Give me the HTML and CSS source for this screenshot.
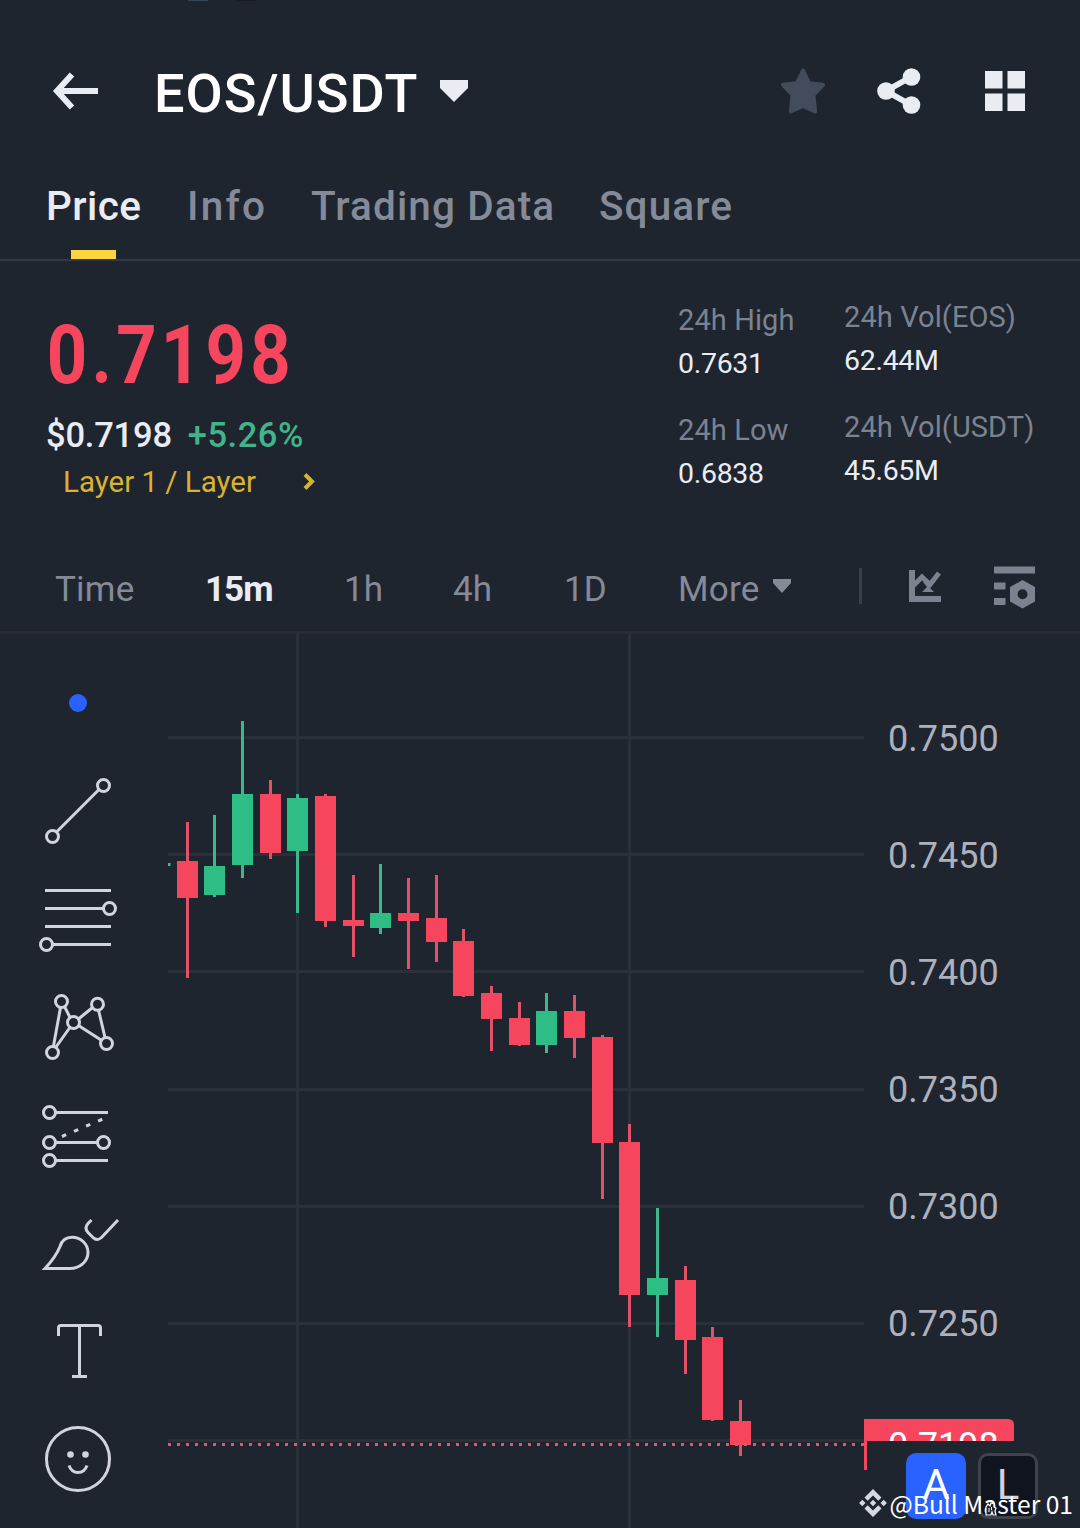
FILE: index.html
```html
<!DOCTYPE html>
<html lang="en">
<head>
    <meta charset="UTF-8">
    <meta name="viewport" content="width=device-width, initial-scale=1.0">
    <title>EOS/USDT</title>
    <link rel="stylesheet" href="styles.css">
</head>
<body>

    <header class="header">
        <svg class="back" width="46" height="38" viewBox="0 0 46 38">
            <path d="M20 2.500L5 19l15 16.500M5 19h41" fill="none" stroke="#eaecf3" stroke-width="6"/>
        </svg>
        <h1 class="pair">EOS/USDT</h1>
        <svg class="pair-caret" width="28" height="22" viewBox="0 0 28 22">
            <path d="M0 0h28v8L14 22 0 8z" fill="#eaecf3"/>
        </svg>
        <div class="header-icons">
            <svg width="46" height="48" viewBox="0 0 46 48">
                <path d="M23 3.500l6 12.700 14 1.600-9.600 10.200 1.700 16.500L23 39 10.900 44.500l1.700-16.500L3 17.800l14-1.600z" fill="#434c5a" stroke="#434c5a" stroke-width="4" stroke-linejoin="round"/>
            </svg>
            <svg width="44" height="48" viewBox="0 0 44 48">
                <path d="M34 10L9 24l25 14" fill="none" stroke="#eaecf3" stroke-width="6"/>
                <circle cx="34.500" cy="10" r="8.800" fill="#eaecf3"/>
                <circle cx="9" cy="24" r="8.800" fill="#eaecf3"/>
                <circle cx="34.500" cy="38" r="8.800" fill="#eaecf3"/>
            </svg>
            <svg width="40" height="40" viewBox="0 0 40 40">
                <path d="M0 0h17.500v17.500H0zM22.500 0H40v17.500H22.500zM0 22.500h17.500V40H0zM22.500 22.500H40V40H22.500z" fill="#eaecf3"/>
            </svg>
        </div>
    </header>

    <nav class="tabs">
        <span class="tab active">Price</span>
        <span class="tab info">Info</span>
        <span class="tab">Trading Data</span>
        <span class="tab">Square</span>
    </nav>

    <section class="summary">
        <div class="quote">
            <div class="last-price">0.7198</div>
            <div class="change">
                <span class="fiat">$0.7198</span>
                <span class="percent">+5.26%</span>
            </div>
            <div class="category">
                <span>Layer 1 / Layer</span>
                <svg width="12" height="18" viewBox="0 0 12 18">
                    <path d="M2 1.500l7 7-7 7" fill="none" stroke="#d9b22f" stroke-width="4"/>
                </svg>
            </div>
        </div>
        <div class="stats">
            <div class="stat">
                <div class="label">24h High</div>
                <div class="value">0.7631</div>
            </div>
            <div class="stat">
                <div class="label">24h Low</div>
                <div class="value">0.6838</div>
            </div>
        </div>
        <div class="stats volume">
            <div class="stat">
                <div class="label">24h Vol(EOS)</div>
                <div class="value">62.44M</div>
            </div>
            <div class="stat">
                <div class="label">24h Vol(USDT)</div>
                <div class="value">45.65M</div>
            </div>
        </div>
    </section>

    <div class="intervals">
        <span>Time</span>
        <span class="selected">15m</span>
        <span>1h</span>
        <span>4h</span>
        <span>1D</span>
        <span>More</span>
        <svg width="18" height="42" viewBox="0 0 18 42">
            <path d="M0 11h18v4l-9 10-9-10z" fill="#848a97"/>
        </svg>
        <svg width="3" height="42" viewBox="0 0 3 42">
            <path d="M1.500 0v36" stroke="#3a404b" stroke-width="3"/>
        </svg>
        <svg width="33" height="42" viewBox="0 0 33 42">
            <path d="M0 2h6v26h26v6H0z" fill="#7b8290"/>
            <path d="M4 18l9-9 8 7.500L30 5" fill="none" stroke="#7b8290" stroke-width="5"/>
            <path d="M14 14h10l-4 5 5 5H13l5-5z" fill="#7b8290"/>
        </svg>
        <svg width="42" height="46" viewBox="0 0 42 46">
            <path d="M0 .5h41v7H0zM0 16.500h11.500v7H0zM0 32h11.500v7H0z" fill="#7b8290"/>
            <path d="M28.500 14l12.500 7v14.500l-12.500 7-12.500-7V21z" fill="#7b8290"/>
            <circle cx="28.500" cy="28.300" r="5" fill="#1f252f"/>
        </svg>
    </div>

    <main class="chart">
        <aside class="tools">
            <svg viewBox="0 0 168 108">
                <circle class="dot" cx="78" cy="54" r="9"/>
            </svg>
            <svg viewBox="0 0 168 108">
                <path d="M56.500 75L99 32.500"/>
                <circle cx="52.500" cy="79.500" r="6"/>
                <circle cx="103.500" cy="28.500" r="6"/>
            </svg>
            <svg viewBox="0 0 168 108">
                <path d="M45 25.500h66M45 43.500h58M45 61.500h66M53 79.500h58"/>
                <circle cx="109.500" cy="43.500" r="6"/>
                <circle cx="46.500" cy="79.500" r="6"/>
            </svg>
            <svg viewBox="0 0 168 108">
                <path d="M60.500 34.500L53.500 73M64.500 33.500l5.500 11M56 74l13.500-19M78.500 46L92 35M98.500 37l6.500 27.500M78.500 52.500L101 67"/>
                <circle cx="61.500" cy="28.500" r="6"/>
                <circle cx="97.500" cy="31.300" r="6"/>
                <circle cx="73.500" cy="49.500" r="6"/>
                <circle cx="52.500" cy="79.500" r="6"/>
                <circle cx="106.500" cy="70.500" r="6"/>
            </svg>
            <svg viewBox="0 0 168 108">
                <path d="M55 31.500h53M55 61.500h42M55 79.500h53"/>
                <path d="M62 55.500L104 37.500" stroke-dasharray="4.500 8.600"/>
                <circle cx="49.500" cy="31.500" r="6"/>
                <circle cx="49.500" cy="61.500" r="6"/>
                <circle cx="103.500" cy="61.500" r="6"/>
                <circle cx="49.500" cy="79.500" r="6"/>
            </svg>
            <svg viewBox="0 0 168 108">
                <path d="M45 79.500C52 72 57 65 60 57.500C62 51 67 48.300 72 48.300C81 48.300 88 55 88 63.500C88 73 79 79.500 70 79.500z"/>
                <path d="M91.500 31l-3.500 3.500q-4 4.500 0 9l5 5q4 4 8.500 0L118 31"/>
            </svg>
            <svg viewBox="0 0 168 108">
                <path d="M58.500 39v-8q0-2.500 2.500-2.500h37q2.500 0 2.500 2.500v8M79.500 28.500v51M72 79.500h15"/>
            </svg>
            <svg viewBox="0 0 168 108">
                <circle cx="78" cy="54" r="31.500"/>
                <circle class="eye" cx="70.500" cy="49.500" r="3.300"/>
                <circle class="eye" cx="85.500" cy="49.500" r="3.300"/>
                <path d="M69 60.500q2.500 7 9 7t9-7"/>
            </svg>
        </aside>

        <svg class="plot" viewBox="168 634 912 894">
            <path class="grid" d="M168 737.500H864M168 854.500H864M168 971.500H864M168 1089.500H864M168 1206.500H864M168 1323.500H864M168 1440.500H864"/>
            <path class="grid" d="M297.500 634V1528M629.500 634V1528"/>

            <!-- wicks -->
            <path class="wick up" d="M169 863V866M214.500 815V897M242.500 721V878M297.500 794V913M380.500 864V934M546.500 993V1053M657.500 1208V1337"/>
            <path class="wick down" d="M187.500 822V978M270.500 780V859M325.500 794V927M353.500 875V957M408.500 878V969M436.500 875V962M463.500 929V997M491.500 986V1051M519.500 1002V1046M574.500 995V1058M602.500 1035V1199M629.500 1124V1327M685.500 1266V1374M712.500 1327V1421M740.500 1400V1456"/>

            <!-- bodies -->
            <path class="body up" d="M214.500 866V895M242.500 794V865M297.500 798V851M380.500 913V928M546.500 1011V1045M657.500 1278V1295"/>
            <path class="body down" d="M187.500 861V898M270.500 794V853M325.500 796V921M353.500 920V926M408.500 913V921M436.500 918V942M463.500 941V996M491.500 993V1019M519.500 1018V1045M574.500 1011V1038M602.500 1037V1143M629.500 1142V1295M685.500 1280V1340M712.500 1337V1420M740.500 1421V1445"/>

            <path class="last-line" d="M168 1444.500H864"/>

            <g class="axis">
                <text x="888" y="751">0.7500</text>
                <text x="888" y="868">0.7450</text>
                <text x="888" y="985">0.7400</text>
                <text x="888" y="1102">0.7350</text>
                <text x="888" y="1219">0.7300</text>
                <text x="888" y="1336">0.7250</text>
            </g>

            <clipPath id="tag-clip"><path d="M864 1419h150v22H864z"/></clipPath>
            <g clip-path="url(#tag-clip)">
                <path class="tag" d="M864 1419h144q6 0 6 6v20H864z"/>
                <text class="tag-text" x="888" y="1458">0.7198</text>
            </g>
            <path class="tag" d="M864 1441h3v29h-3z"/>
        </svg>

        <div class="scale-buttons">
            <span class="scale auto">A</span>
            <span class="scale log">L</span>
        </div>

        <div class="watermark">
            <svg width="28" height="28" viewBox="0 0 28 28">
                <path d="M14 0l8.500 8.500-3.200 3.200L14 6.400l-5.300 5.300-3.200-3.200zM3.300 10.800L6.500 14l-3.200 3.200L.1 14zM14 10.800l3.200 3.200-3.200 3.200-3.200-3.200zM24.700 10.800l3.200 3.200-3.200 3.200-3.200-3.200zM14 28l8.500-8.500-3.200-3.200L14 21.600l-5.300-5.300-3.200 3.200z" fill="#d5d7e2"/>
            </svg>
            <span>@Bull Master 01</span>
            <svg class="pointer" width="12" height="14" viewBox="0 0 12 14">
                <path d="M1 13V5l2-3 2 2 1-3 3 1v3l2 1-1 3 1 4H8l-1-3-1 3z" fill="#20242e" stroke="#fff" stroke-width="1.200"/>
                <path d="M4 6v4M6.500 5v3" stroke="#fff" stroke-width="1"/>
            </svg>
        </div>
    </main>

</body>
</html>
```
FILE: styles.css
```css
* {
    box-sizing: border-box;
}
body {
    margin: 0;
    width: 1080px;
    height: 1528px;
    overflow: hidden;
    background-color: #1f252f;
    color: #eaecf3;
    font-family: Roboto, "Noto Sans", sans-serif;
}
svg {
    display: block;
    flex-shrink: 0;
}

/* Header */
.header {
    display: flex;
    align-items: center;
    height: 182px;
    padding: 0 55px 0 52px;
    background: linear-gradient(#34465a, #34465a) 188px 0 / 20px 1px no-repeat,
                linear-gradient(#151a26, #151a26) 237px 0 / 19px 1px no-repeat;
}
.pair {
    margin: 5px 0 0 54px;
    width: 288px;
    padding-left: 2px;
    font-size: 54px;
    font-weight: 500;
    line-height: 64px;
    letter-spacing: 1px;
    color: #fff;
}
.header-icons {
    display: flex;
    align-items: center;
    margin-left: auto;
}
.header-icons svg:nth-child(1) {
    margin-right: 51px;
}
.header-icons svg:nth-child(2) {
    margin-right: 64px;
}

/* Tabs */
.tabs {
    display: grid;
    grid-template-columns: 141px 124px 288px auto;
    justify-content: start;
    height: 79px;
    padding-left: 46px;
    border-bottom: 2px solid #333944;
}
.tab {
    display: flex;
    flex-direction: column;
    align-items: center;
    justify-self: start;
    font-size: 40.5px;
    font-weight: 500;
    line-height: 48px;
    letter-spacing: 1.1px;
    white-space: nowrap;
    color: #848a97;
}
.tab.active {
    letter-spacing: 0.4px;
    color: #eaecf3;
}
.tab.info {
    letter-spacing: 2.2px;
}
.tab.active::after {
    content: "";
    width: 45px;
    height: 9px;
    margin-top: 20px;
    background-color: #fcd53f;
}

/* Price summary */
.summary {
    display: grid;
    grid-template-columns: 632px 166px auto;
    justify-content: start;
    height: 286px;
    padding-left: 46px;
    white-space: nowrap;
}
.quote {
    padding-top: 54px;
}
.last-price {
    padding-left: 1px;
    font-size: 82px;
    font-weight: 700;
    line-height: 80px;
    letter-spacing: 4.9px;
    color: #f6465d;
    transform: scaleX(0.86);
    transform-origin: left;
}
.change {
    display: flex;
    gap: 16px;
    margin-top: 20px;
    font-size: 34.5px;
    font-weight: 500;
    line-height: 40px;
    letter-spacing: -0.2px;
}
.percent {
    letter-spacing: 0.5px;
    color: #41b48a;
}
.category {
    display: flex;
    align-items: center;
    gap: 47px;
    margin-top: 7px;
    padding-left: 17px;
    font-size: 29.5px;
    line-height: 40px;
    color: #d9b22f;
}
.stats {
    display: flex;
    flex-direction: column;
    gap: 24px;
    padding-top: 38px;
}
.stats.volume {
    padding-top: 35px;
}
.stat {
    font-size: 29px;
    line-height: 43px;
}
.label {
    letter-spacing: 0.1px;
    color: #7b8290;
}
.value {
    font-size: 28.5px;
    letter-spacing: -0.3px;
}

/* Interval bar */
.intervals {
    display: grid;
    grid-template-columns: 150px 139px 109px 111px 114px 95px 86px 50px 84.5px 1fr;
    align-items: center;
    height: 87px;
    padding-left: 55px;
    border-bottom: 3px solid #272c37;
    font-size: 35px;
    letter-spacing: 0.2px;
    color: #848a97;
}
.selected {
    font-weight: 700;
    letter-spacing: -1px;
    color: #eaecf3;
}

/* Chart */
.chart {
    display: flex;
    position: relative;
    height: 894px;
}
.tools {
    width: 168px;
    padding-top: 15px;
}
.tools svg {
    width: 168px;
    height: 108px;
    fill: none;
    stroke: #d1d4e0;
    stroke-width: 3;
}
.tools .dot {
    fill: #2962ff;
    stroke: none;
}
.tools .eye {
    fill: #d1d4e0;
    stroke: none;
}
.plot {
    width: 912px;
    height: 894px;
}
.grid {
    stroke: #2a303a;
    stroke-width: 3;
}
.wick {
    stroke-width: 3;
}
.body {
    stroke-width: 21;
}
.up {
    stroke: #2ebd85;
}
.down {
    stroke: #f6465d;
}
.wick.up {
    stroke: #3cb98c;
}
.wick.down {
    stroke: #e2506a;
}
.last-line {
    stroke: #e0566c;
    stroke-width: 3;
    stroke-dasharray: 3 6;
}
.axis text {
    font-size: 36px;
    fill: #adb1bb;
}
.tag {
    fill: #f6465d;
}
.tag-text {
    font-size: 36px;
    fill: #fff;
}

/* Overlays in the chart corner */
.scale-buttons {
    position: absolute;
    right: 42px;
    bottom: 9px;
    display: flex;
    gap: 12px;
}
.scale {
    width: 60px;
    height: 66px;
    border-radius: 10px;
    font-size: 42px;
    line-height: 63px;
    text-align: center;
}
.auto {
    background-color: #2962ff;
    color: #fff;
}
.log {
    border: 3px solid #3d424c;
    background-color: #0f141e;
    line-height: 57px;
    color: #cfd2df;
}
.watermark {
    position: absolute;
    right: 7px;
    bottom: 7px;
    display: flex;
    align-items: center;
    gap: 3px;
    font-family: "Noto Sans CJK SC", "Noto Sans", sans-serif;
    font-size: 24.6px;
    line-height: 36px;
    white-space: nowrap;
    color: #fff;
}
.pointer {
    position: absolute;
    left: 126px;
    top: 17px;
}
```
